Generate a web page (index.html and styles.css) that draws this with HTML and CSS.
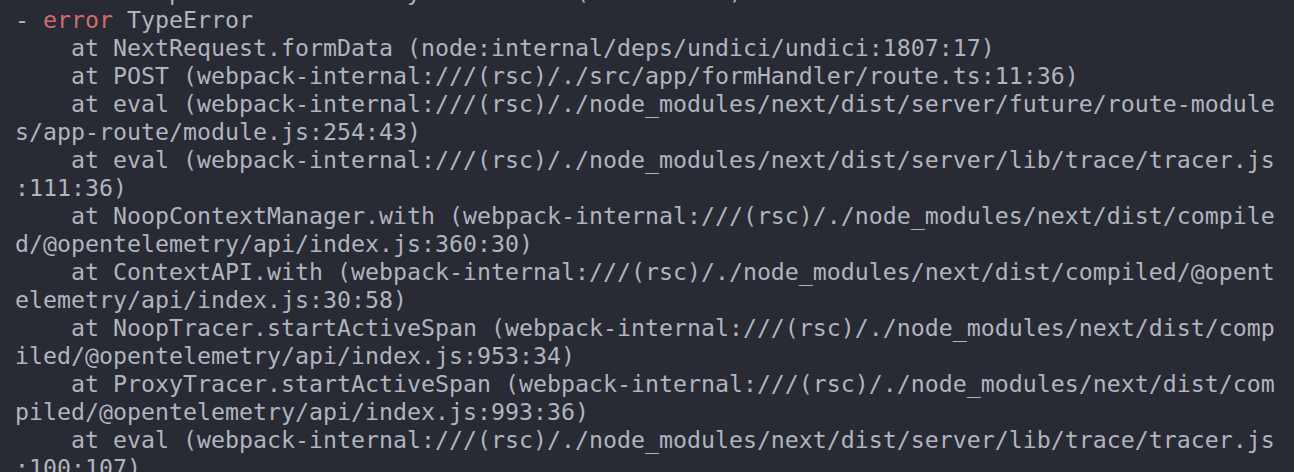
FILE: index.html
```html
<!DOCTYPE html>
<html>
<head>
<meta charset="utf-8">
<link rel="stylesheet" href="styles.css">
</head>
<body>
<main class="term">
<div class="ln">- <span class="evt">event</span> compiled successfully in 203 ms (90 modules)</div>
<div class="ln">- <span class="err">error</span> TypeError</div>
<div class="ln">    at NextRequest.formData (node:internal/deps/undici/undici:1807:17)</div>
<div class="ln">    at POST (webpack-internal:///(rsc)/./src/app/formHandler/route.ts:11:36)</div>
<div class="ln">    at eval (webpack-internal:///(rsc)/./node_modules/next/dist/server/future/route-module</div>
<div class="ln">s/app-route/module.js:254:43)</div>
<div class="ln">    at eval (webpack-internal:///(rsc)/./node_modules/next/dist/server/lib/trace/tracer.js</div>
<div class="ln">:111:36)</div>
<div class="ln">    at NoopContextManager.with (webpack-internal:///(rsc)/./node_modules/next/dist/compile</div>
<div class="ln">d/@opentelemetry/api/index.js:360:30)</div>
<div class="ln">    at ContextAPI.with (webpack-internal:///(rsc)/./node_modules/next/dist/compiled/@opent</div>
<div class="ln">elemetry/api/index.js:30:58)</div>
<div class="ln">    at NoopTracer.startActiveSpan (webpack-internal:///(rsc)/./node_modules/next/dist/comp</div>
<div class="ln">iled/@opentelemetry/api/index.js:953:34)</div>
<div class="ln">    at ProxyTracer.startActiveSpan (webpack-internal:///(rsc)/./node_modules/next/dist/com</div>
<div class="ln">piled/@opentelemetry/api/index.js:993:36)</div>
<div class="ln">    at eval (webpack-internal:///(rsc)/./node_modules/next/dist/server/lib/trace/tracer.js</div>
<div class="ln">:100:107)</div>
</main>
</body>
</html>
```
FILE: styles.css
```css
html, body {
  margin: 0;
  padding: 0;
  background: #282b33;
  overflow: hidden;
}
.term {
  margin-top: -22px;
  padding-left: 15px;
  font-family: "DejaVu Sans Mono", "Liberation Mono", monospace;
  font-size: 23.25px;
  line-height: 28px;
  color: #b0b4bf;
}
.ln {
  white-space: pre;
  height: 28px;
}
.err {
  color: #d46a6e;
}
.evt {
  color: #b77fd0;
}
```
